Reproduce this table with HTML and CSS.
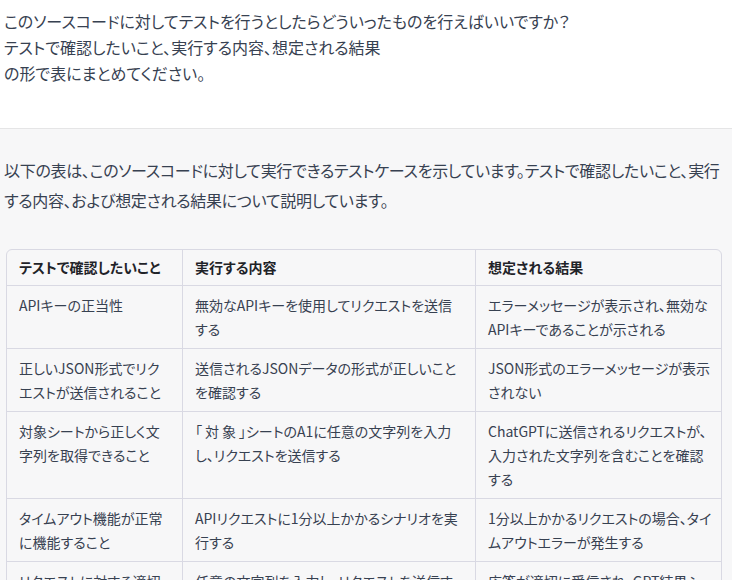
FILE: index.html
```html
<!DOCTYPE html>
<html lang="ja">
<head>
<meta charset="utf-8">
<link rel="stylesheet" href="styles.css">
</head>
<body>
<div class="msg user">
  <p>このソースコードに対してテストを行うとしたらどういったものを行えばいいですか？<br>テストで確認したいこと、実行する内容、想定される結果<br>の形で表にまとめてください。</p>
</div>
<div class="msg assistant">
  <p class="lead">以下の表は、このソースコードに対して実行できるテストケースを示しています。テストで確認したいこと、実行する内容、および想定される結果について説明しています。</p>
  <div class="table-wrap">
    <table>
      <colgroup><col class="c1"><col class="c2"><col class="c3"></colgroup>
      <thead>
        <tr><th>テストで確認したいこと</th><th>実行する内容</th><th>想定される結果</th></tr>
      </thead>
      <tbody>
        <tr><td>APIキーの正当性</td><td>無効なAPIキーを使用してリクエストを送信する</td><td>エラーメッセージが表示され、無効なAPIキーであることが示される</td></tr>
        <tr><td>正しいJSON形式でリクエストが送信されること</td><td>送信されるJSONデータの形式が正しいことを確認する</td><td>JSON形式のエラーメッセージが表示されない</td></tr>
        <tr><td>対象シートから正しく文字列を取得できること</td><td><span class="quote">「対象</span>」シートのA1に任意の文字列を入力し、リクエストを送信する</td><td>ChatGPTに送信されるリクエストが、入力された文字列を含むことを確認する</td></tr>
        <tr><td>タイムアウト機能が正常に機能すること</td><td>APIリクエストに1分以上かかるシナリオを実行する</td><td>1分以上かかるリクエストの場合、タイムアウトエラーが発生する</td></tr>
        <tr><td>リクエストに対する適切な応答が返されること</td><td>任意の文字列を入力し、リクエストを送信する</td><td>応答が適切に受信され、GPT結果シートに出力される</td></tr>
      </tbody>
    </table>
  </div>
</div>
</body>
</html>
```

FILE: styles.css
```css
html, body {
  margin: 0;
  padding: 0;
  background: #ffffff;
}
body {
  font-family: "Noto Sans CJK JP", "Noto Sans", sans-serif;
  font-feature-settings: "palt";
  color: #374151;
  width: 732px;
  overflow: hidden;
}
p { margin: 0; }
.msg.user {
  padding: 8px 8px 42px 4px;
  font-size: 16px;
  line-height: 26px;
  border-bottom: 1px solid #e5e5e6;
}
.msg.assistant {
  background: #f7f7f8;
  padding: 26px 8px 40px 4px;
  min-height: 500px;
}
.lead {
  font-size: 16px;
  line-height: 30px;
  letter-spacing: -0.3px;
  color: #374151;
}
.table-wrap {
  margin: 34px 0 0 2px;
  width: 716px;
  box-sizing: border-box;
  border: 1px solid #d9d9e3;
  border-radius: 6px;
  overflow: hidden;
}
table {
  width: 714px;
  table-layout: fixed;
  border-collapse: separate;
  border-spacing: 0;
  font-size: 14px;
  line-height: 24px;
}
col.c1 { width: 175px; }
col.c2 { width: 293px; }
col.c3 { width: 246px; }
th, td {
  text-align: left;
  vertical-align: top;
  padding: 7px 12px;
}
th:nth-child(3), td:nth-child(3) { padding-right: 8px; }
th {
  font-weight: 700;
  color: #1f2328;
  line-height: 21px;
}
th + th, td + td { border-left: 1px solid #d9d9e3; }
tbody td { border-top: 1px solid #d9d9e3; }
.quote {
  letter-spacing: 3px;
}
```
